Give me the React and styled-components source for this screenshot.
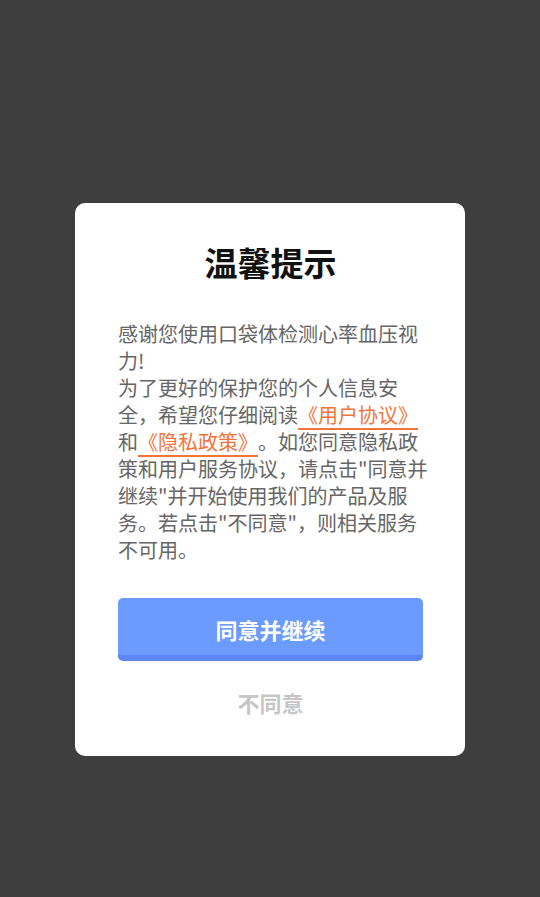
import React from 'react';
import styled, { createGlobalStyle } from 'styled-components';

const GlobalStyle = createGlobalStyle`
  html, body {
    margin: 0;
    padding: 0;
    background: #3e3e3e;
  }
  body {
    font-family: "Noto Sans CJK SC", "Noto Sans", sans-serif;
    text-spacing-trim: space-all;
  }
`;

const Overlay = styled.div`
  width: 540px;
  height: 897px;
  display: flex;
  justify-content: center;
  padding-top: 203px;
  box-sizing: border-box;
  background: #3e3e3e;
`;

const Dialog = styled.div`
  width: 390px;
  height: 553px;
  box-sizing: border-box;
  padding: 38px 42px 0 43px;
  background: #ffffff;
  border-radius: 10px;
  display: flex;
  flex-direction: column;
  align-items: stretch;
`;

const Title = styled.h2`
  margin: 0;
  font-size: 33px;
  line-height: 42px;
  font-weight: 700;
  color: #111111;
  text-align: center;
`;

const Body = styled.p`
  margin: 37px -6px 0 0;
  font-size: 20px;
  line-height: 27px;
  color: #666666;
  word-break: break-all;
  text-spacing-trim: space-all;
`;

const Link = styled.a`
  color: #f3743a;
  text-decoration: underline;
  text-decoration-thickness: 1.5px;
  text-underline-offset: 5px;
  cursor: pointer;
`;

const AgreeButton = styled.button`
  margin-top: 35px;
  height: 63px;
  border: none;
  border-bottom: 6px solid #5c86f3;
  border-radius: 5px;
  background: #6b9bfe;
  color: #ffffff;
  font-family: inherit;
  font-size: 22px;
  font-weight: 700;
  padding: 5px 0 0;
  cursor: pointer;
`;

const DeclineButton = styled.button`
  margin-top: 26px;
  border: none;
  background: transparent;
  color: #c6c6c6;
  font-family: inherit;
  font-size: 22px;
  line-height: 28px;
  font-weight: 700;
  cursor: pointer;
`;

const App = () => (
  <>
    <GlobalStyle />
    <Overlay>
      <Dialog>
        <Title>温馨提示</Title>
        <Body>
          感谢您使用口袋体检测心率血压视力!
          <br />
          为了更好的保护您的个人信息安全，希望您仔细阅读<Link>《用户协议》</Link>和<Link>《隐私政策》</Link>。如您同意隐私政策和用户服务协议，请点击"同意并继续"并开始使用我们的产品及服务。若点击"不同意"，则相关服务不可用。
        </Body>
        <AgreeButton>同意并继续</AgreeButton>
        <DeclineButton>不同意</DeclineButton>
      </Dialog>
    </Overlay>
  </>
);

export default App;
